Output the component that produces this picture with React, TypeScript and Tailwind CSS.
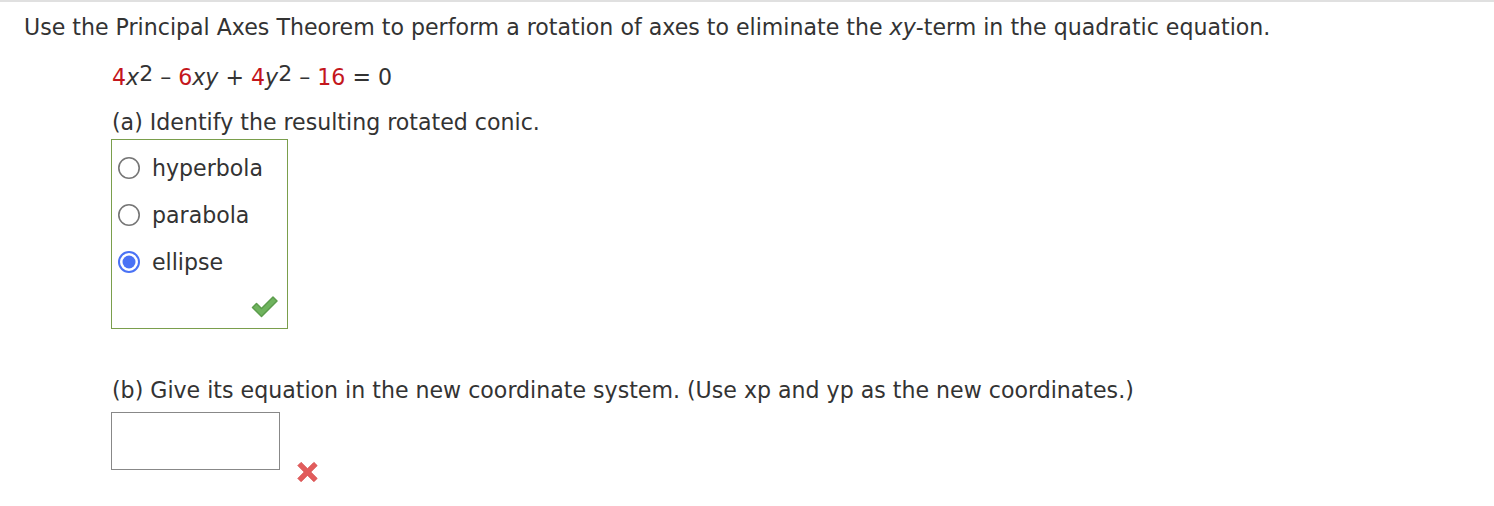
const red = "text-[#c4161c]";

function Radio({ checked }: { checked?: boolean }) {
  return (
    <svg width="24" height="24" viewBox="0 0 24 24" className="flex-shrink-0">
      {checked ? (
        <>
          <circle cx="12" cy="12" r="10" fill="white" stroke="#4a72f5" strokeWidth="2" />
          <circle cx="12" cy="12" r="6.5" fill="#4a72f5" />
        </>
      ) : (
        <circle cx="12" cy="12" r="10.2" fill="white" stroke="#767676" strokeWidth="1.6" />
      )}
    </svg>
  );
}

function Check() {
  return (
    <svg width="27" height="23" viewBox="0 0 27 23">
      <path d="M1.5 12.5 L5.5 8.5 L10.5 13.5 L22 2 L26 6 L10.5 21.5 Z" fill="#6fb35e" stroke="#5c9d4c" strokeWidth="1.5" strokeLinejoin="round" />
    </svg>
  );
}

function Cross() {
  return (
    <svg width="23" height="22" viewBox="0 0 24 24">
      <path d="M1.5 5 L5 1.5 L12 8.5 L19 1.5 L22.5 5 L15.5 12 L22.5 19 L19 22.5 L12 15.5 L5 22.5 L1.5 19 L8.5 12 Z" fill="#e25c5c" stroke="#d64c4c" strokeWidth="1" strokeLinejoin="round" />
    </svg>
  );
}

export default function App() {
  const options = [
    { label: "hyperbola", checked: false },
    { label: "parabola", checked: false },
    { label: "ellipse", checked: true },
  ];
  const sup = "text-[22px] relative top-[-4px] align-baseline";
  return (
    <div className="w-[1494px] h-[506px] bg-white border-t-2 border-[#e0e0e0] text-[#333] text-[22.1px] leading-[22px] font-['Verdana','DejaVu_Sans',sans-serif]">
      <div className="pl-6 pt-[14px]">Use the Principal Axes Theorem to perform a rotation of axes to eliminate the <i>xy</i>-term in the quadratic equation.</div>
      <div className="pl-[112px]">
        <div className="mt-[28px]">
          <span className={red}>4</span><i>x</i><sup className={sup}>2</sup>
          {" – "}<span className={red}>6</span><i>xy</i>{" + "}<span className={red}>4</span><i>y</i><sup className={sup}>2</sup>
          {" – "}<span className={red}>16</span>{" = 0"}
        </div>
        <div className="mt-[23px]">(a) Identify the resulting rotated conic.</div>
        <div className="mt-[6px] -ml-px w-[177px] h-[190px] border border-[#7a9e4c] flex flex-col pl-[5px] pt-[4px]">
          {options.map(o => (
            <div key={o.label} className="flex items-center gap-[11px] h-[47px]">
              <Radio checked={o.checked} />
              <span>{o.label}</span>
            </div>
          ))}
          <div className="flex justify-end pr-[9px] mt-auto mb-[10px]">
            <Check />
          </div>
        </div>
        <div className="mt-[50px]">(b) Give its equation in the new coordinate system. (Use xp and yp as the new coordinates.)</div>
        <div className="flex items-end mt-[11px] -ml-px">
          <div className="w-[169px] h-[58px] border border-[#888]" />
          <div className="ml-[16px] -mb-[13px]"><Cross /></div>
        </div>
      </div>
    </div>
  );
}
